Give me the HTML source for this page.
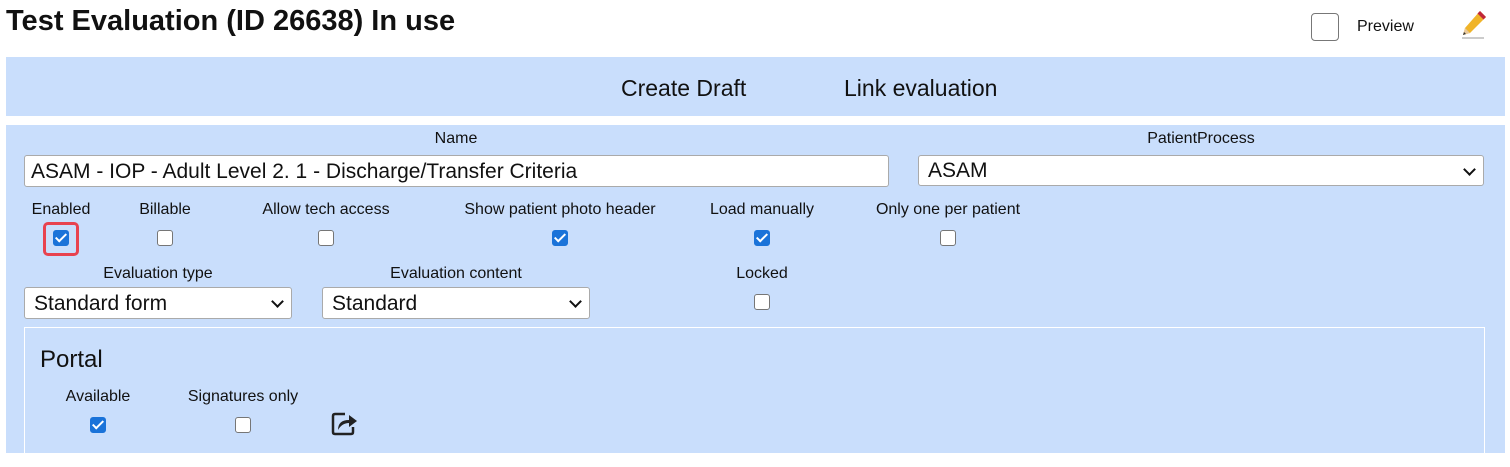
<!DOCTYPE html>
<html><head><style>
body{margin:0;width:1510px;height:453px;background:#fff;font-family:"Liberation Sans",Arial,sans-serif;position:relative;overflow:hidden;color:#111}
.a{position:absolute}
.lbl{position:absolute;font-size:16px;transform:translateX(-50%);white-space:nowrap;top:201px}
.cb{position:absolute;width:14px;height:14px;border:1.5px solid #767676;border-radius:3px;background:#fff;transform:translateX(-50%)}
.ck{background:#1a73d9;border-color:#1a73d9}
.ck::after{content:"";position:absolute;left:4px;top:0px;width:4px;height:9px;border:solid #fff;border-width:0 2.5px 2.5px 0;transform:rotate(45deg)}
.box{position:absolute;background:#fff;border:1px solid #aaa;border-radius:3px;font-size:21px;box-sizing:border-box;padding-left:9px;line-height:31px}
.chev{position:absolute;right:9px;top:9px;width:7px;height:7px;border:solid #111;border-width:0 2px 2px 0;transform:rotate(45deg)}
</style></head><body>
<div class="a" style="left:6px;top:5px;font-size:29px;font-weight:bold">Test Evaluation (ID 26638) In use</div>
<div class="a" style="left:1311px;top:13px;width:28px;height:28px;border:1.5px solid #777;border-radius:4px;box-sizing:border-box"></div>
<div class="a" style="left:1357px;top:18px;font-size:16px">Preview</div>
<svg class="a" style="left:1458px;top:8px" width="32" height="32" viewBox="0 0 32 32"><path d="M22 3 L28 9 L12 25 L5 27 L7 20 Z" fill="#f0b429"/><path d="M22 3 L28 9 L25.5 11.5 L19.5 5.5 Z" fill="#c0273a"/><path d="M5 27 L7 20 L12 25 Z" fill="#e9c99b"/><path d="M5 27 L6 24 L8 26Z" fill="#333"/><rect x="4" y="29" width="22" height="2" fill="#ccc"/></svg>
<div class="a" style="left:6px;top:57px;width:1499px;height:59px;background:#c9defc"></div>
<div class="a" style="left:621px;top:75px;font-size:23px">Create Draft</div>
<div class="a" style="left:844px;top:75px;font-size:23px">Link evaluation</div>
<div class="a" style="left:6px;top:125px;width:1499px;height:328px;background:#c9defc"></div>
<div class="lbl" style="left:456px;top:130px">Name</div>
<div class="lbl" style="left:1201px;top:130px">PatientProcess</div>
<div class="box" style="left:24px;top:155px;width:865px;height:32px;padding-left:6px">ASAM - IOP - Adult Level 2. 1 - Discharge/Transfer Criteria</div>
<div class="box" style="left:918px;top:155px;width:566px;height:31px;line-height:30px">ASAM<div class="chev"></div></div>
<div class="lbl" style="left:61px">Enabled</div>
<div class="lbl" style="left:165px">Billable</div>
<div class="lbl" style="left:326px">Allow tech access</div>
<div class="lbl" style="left:560px">Show patient photo header</div>
<div class="lbl" style="left:762px">Load manually</div>
<div class="lbl" style="left:948px">Only one per patient</div>
<div class="a" style="left:43px;top:222px;width:36px;height:34px;border:3px solid #e8424f;border-radius:5px;box-sizing:border-box"></div>
<div class="cb ck" style="left:61px;top:230px"></div>
<div class="cb" style="left:165px;top:230px"></div>
<div class="cb" style="left:326px;top:230px"></div>
<div class="cb ck" style="left:560px;top:230px"></div>
<div class="cb ck" style="left:762px;top:230px"></div>
<div class="cb" style="left:948px;top:230px"></div>
<div class="lbl" style="left:158px;top:265px">Evaluation type</div>
<div class="lbl" style="left:456px;top:265px">Evaluation content</div>
<div class="lbl" style="left:762px;top:265px">Locked</div>
<div class="box" style="left:24px;top:287px;width:268px;height:32px">Standard form<div class="chev"></div></div>
<div class="box" style="left:322px;top:287px;width:268px;height:32px">Standard<div class="chev"></div></div>
<div class="cb" style="left:762px;top:294px"></div>
<div class="a" style="left:24px;top:327px;width:1461px;height:140px;border:1px solid #fff;box-sizing:border-box"></div>
<div class="a" style="left:40px;top:346px;font-size:24px">Portal</div>
<div class="lbl" style="left:98px;top:388px">Available</div>
<div class="lbl" style="left:243px;top:388px">Signatures only</div>
<div class="cb ck" style="left:98px;top:417px"></div>
<div class="cb" style="left:243px;top:417px"></div>
<svg class="a" style="left:331px;top:410px" width="28" height="26" viewBox="0 0 28 26"><path d="M14 4 H4 Q2 4 2 6 V22 Q2 24 4 24 H20 Q22 24 22 22 V17" fill="none" stroke="#222" stroke-width="2.5"/><path d="M7 20 Q7 10 18 10 V5 L26 11 L18 17 V13 Q11 13 7 20Z" fill="#222"/></svg>
</body></html>
